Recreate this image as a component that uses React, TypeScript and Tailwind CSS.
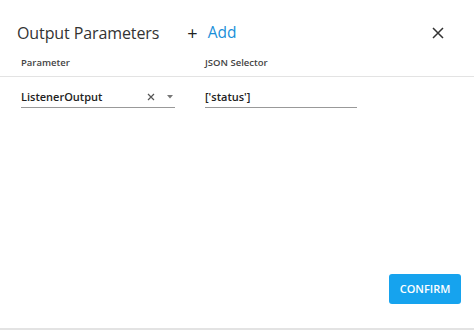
import React from 'react';

export default function App() {
  return (
    <div className="w-[474px] h-[330px] bg-white flex flex-col font-['Open_Sans',sans-serif] text-[#333]">
      {/* Header */}
      <div className="mt-[22px] h-[22px] flex items-center px-[17px]">
        <h2 className="text-[16px] text-[#333] tracking-[-0.1px]">Output Parameters</h2>
        <button className="ml-[28px] flex items-center gap-[10px]">
          <span className="text-[18px] leading-none text-[#222]">+</span>
          <span className="text-[15.5px] text-[#1a8fd9]">Add</span>
        </button>
        <button className="ml-auto mr-[13px] text-[#333]">
          <svg width="12" height="12" viewBox="0 0 12 12">
            <path d="M1 1L11 11M11 1L1 11" stroke="currentColor" strokeWidth="1.5" />
          </svg>
        </button>
      </div>

      {/* Column labels */}
      <div className="mt-[12px] h-[14px] flex items-center text-[9.5px] font-semibold text-[#444] px-[21px]">
        <span className="w-[184px]">Parameter</span>
        <span>JSON Selector</span>
      </div>
      <div className="mt-[6px] border-t border-[#e3e3e3]" />

      {/* Row */}
      <div className="flex px-[21px] mt-[10px]">
        <div className="w-[154px] h-[21px] flex items-center border-b border-[#999] text-[11px] text-[#222]">
          <span className="font-semibold">ListenerOutput</span>
          <span className="ml-auto text-[#555]">
            <svg width="8" height="8" viewBox="0 0 8 8">
              <path d="M1 1L7 7M7 1L1 7" stroke="currentColor" strokeWidth="1.2" />
            </svg>
          </span>
          <span className="ml-[12px] mr-[2px] text-[#777]">
            <svg width="6" height="4" viewBox="0 0 6 4">
              <path d="M0 0H6L3 3.5Z" fill="currentColor" />
            </svg>
          </span>
        </div>
        <div className="ml-[30px] w-[152px] h-[21px] flex items-center border-b border-[#999] text-[11px] font-semibold text-[#222]">
          ['status']
        </div>
      </div>

      <div className="flex-1" />
      <div className="flex justify-end px-[13px] pb-[24px]">
        <button className="w-[72px] h-[30px] rounded-[3px] bg-[#16a3ee] text-white text-[11px] font-semibold">
          CONFIRM
        </button>
      </div>
      <div className="h-[2px] bg-[#e3e3e3]" />
    </div>
  );
}
